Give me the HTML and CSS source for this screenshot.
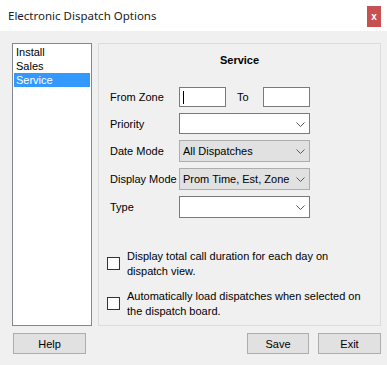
FILE: index.html
```html
<!DOCTYPE html>
<html>
<head>
<meta charset="utf-8">
<link rel="stylesheet" href="styles.css">
</head>
<body>
<div class="window">
  <div class="titlebar">
    <span class="title">Electronic Dispatch Options</span>
    <span class="close">x</span>
  </div>
  <div class="client">
    <div class="main">
      <div class="listbox">
        <div class="item">Install</div>
        <div class="item">Sales</div>
        <div class="item selected">Service</div>
      </div>
      <div class="panel">
        <div class="panel-title">Service</div>
        <div class="form">
          <div class="row row-zone">
            <span class="label">From Zone</span>
            <div class="textbox"><span class="caret"></span></div>
            <span class="to">To</span>
            <div class="textbox"></div>
          </div>
          <div class="row row-priority">
            <span class="label">Priority</span>
            <div class="combo white"><span class="value"></span><svg class="chev" width="9" height="5" viewBox="0 0 9 5"><polyline points="0.5,0.5 4.5,4.5 8.5,0.5" fill="none" stroke="#5a5a5a" stroke-width="1"/></svg></div>
          </div>
          <div class="row row-sel">
            <span class="label">Date Mode</span>
            <div class="combo gray"><span class="value">All Dispatches</span><svg class="chev" width="9" height="5" viewBox="0 0 9 5"><polyline points="0.5,0.5 4.5,4.5 8.5,0.5" fill="none" stroke="#5a5a5a" stroke-width="1"/></svg></div>
          </div>
          <div class="row row-sel">
            <span class="label">Display Mode</span>
            <div class="combo gray"><span class="value">Prom Time, Est, Zone</span><svg class="chev" width="9" height="5" viewBox="0 0 9 5"><polyline points="0.5,0.5 4.5,4.5 8.5,0.5" fill="none" stroke="#5a5a5a" stroke-width="1"/></svg></div>
          </div>
          <div class="row row-sel">
            <span class="label">Type</span>
            <div class="combo white"><span class="value"></span><svg class="chev" width="9" height="5" viewBox="0 0 9 5"><polyline points="0.5,0.5 4.5,4.5 8.5,0.5" fill="none" stroke="#5a5a5a" stroke-width="1"/></svg></div>
          </div>
        </div>
        <div class="checks">
          <div class="check">
            <span class="box"></span>
            <span class="check-text">Display total call duration for each day on<br>dispatch view.</span>
          </div>
          <div class="check">
            <span class="box"></span>
            <span class="check-text">Automatically load dispatches when selected on<br>the dispatch board.</span>
          </div>
        </div>
      </div>
    </div>
    <div class="buttons">
      <div class="btn btn-help">Help</div>
      <div class="spacer"></div>
      <div class="btn btn-save">Save</div>
      <div class="btn btn-exit">Exit</div>
    </div>
  </div>
</div>
</body>
</html>
```
FILE: styles.css
```css
html, body {
  margin: 0;
  padding: 0;
}
body {
  width: 387px;
  height: 365px;
  overflow: hidden;
  background: #f0f0f0;
  font-family: "Liberation Sans", Arial, sans-serif;
  font-size: 11px;
  color: #000;
}
.window {
  width: 387px;
  height: 365px;
  display: flex;
  flex-direction: column;
}
.titlebar {
  height: 31px;
  background: #fff;
  display: flex;
  align-items: center;
  position: relative;
}
.title {
  margin-left: 8px;
  font-family: "Noto Sans", "Open Sans", sans-serif;
  font-size: 11.5px;
  color: #1a1a1a;
  margin-top: 0px;
}
.close {
  position: absolute;
  left: 367px;
  top: 6px;
  width: 14px;
  height: 21px;
  background: #c75050;
  color: #fff;
  font-weight: bold;
  font-size: 10px;
  display: flex;
  align-items: center;
  justify-content: center;
  font-family: "Liberation Sans", Arial, sans-serif;
}
.client {
  flex: 1;
  background: #f0f0f0;
  display: flex;
  flex-direction: column;
}
.main {
  display: flex;
  margin-top: 12px;
  margin-left: 12px;
  gap: 6px;
  height: 283px;
}
.listbox {
  width: 78px;
  height: 281px;
  border: 1px solid #828790;
  background: #fff;
  padding: 1px 1px;
  box-sizing: content-box;
  width: 76px;
  height: 279px;
}
.item {
  height: 14px;
  line-height: 14px;
  padding-left: 2px;
}
.item.selected {
  background: #3399ff;
  color: #fff;
}
.panel {
  width: 281px;
  height: 281px;
  border: 1px solid #dcdcdc;
  display: flex;
  flex-direction: column;
}
.panel-title {
  text-align: center;
  font-weight: bold;
  margin-top: 10px;
  height: 13px;
  line-height: 13px;
}
.form {
  margin-top: 20px;
  margin-left: 11px;
  display: flex;
  flex-direction: column;
  gap: 6px;
}
.row {
  display: flex;
  align-items: center;
}
.label {
  width: 69px;
  flex: none;
}
.textbox {
  width: 45px;
  height: 18px;
  border: 1px solid #7a7a7a;
  background: #fff;
  position: relative;
}
.caret {
  position: absolute;
  left: 3px;
  top: 3px;
  width: 1px;
  height: 13px;
  background: #000;
}
.to {
  width: 37px;
  padding-left: 11px;
  box-sizing: border-box;
}
.combo {
  width: 129px;
  height: 19px;
  display: flex;
  align-items: center;
  justify-content: space-between;
  box-sizing: content-box;
}
.combo.white {
  background: #fff;
  border: 1px solid #7a7a7a;
}
.combo.gray {
  background: #e1e1e1;
  border: 1px solid #adadad;
}
.row-sel .combo {
  height: 20px;
}
.value {
  padding-left: 3px;
}
.chev {
  margin-right: 4px;
  margin-top: 1px;
}
.checks {
  margin-top: 31px;
  margin-left: 8px;
  display: flex;
  flex-direction: column;
  gap: 11px;
}
.check {
  display: flex;
  align-items: center;
}
.box {
  width: 11px;
  height: 11px;
  border: 1px solid #333;
  background: #fff;
  flex: none;
}
.check-text {
  margin-left: 7px;
  line-height: 14.5px;
}
.buttons {
  display: flex;
  margin-top: 7px;
  margin-left: 13px;
  height: 21px;
}
.btn {
  height: 19px;
  border: 1px solid #adadad;
  background: #e1e1e1;
  display: flex;
  align-items: center;
  justify-content: center;
}
.btn-help { width: 71px; }
.spacer { flex: 1; }
.btn-save { width: 60px; margin-right: 9px; }
.btn-exit { width: 61px; margin-right: 6px; }
```
